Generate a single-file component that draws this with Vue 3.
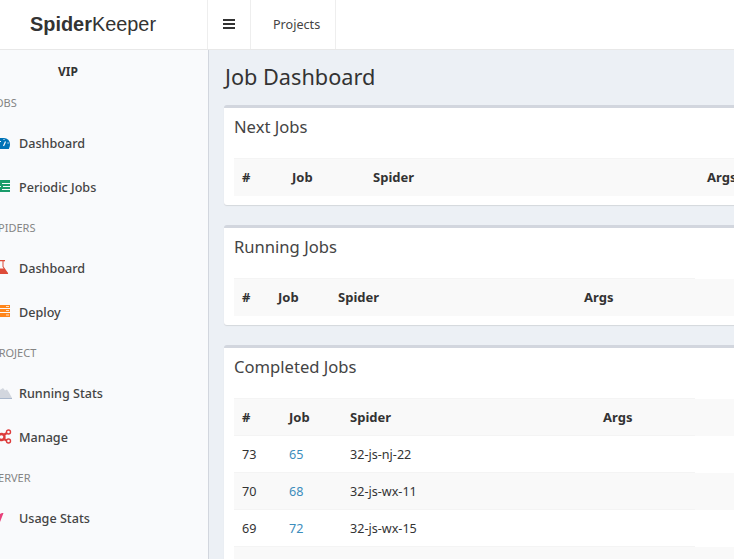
<script setup>
const menu = [
  { label: 'JOBS', items: [{ name: 'Dashboard', icon: 'gauge' }, { name: 'Periodic Jobs', icon: 'list' }] },
  { label: 'SPIDERS', items: [{ name: 'Dashboard', icon: 'flask' }, { name: 'Deploy', icon: 'server' }] },
  { label: 'PROJECT', items: [{ name: 'Running Stats', icon: 'area' }, { name: 'Manage', icon: 'network' }] },
  { label: 'SERVER', items: [{ name: 'Usage Stats', icon: 'heart' }] },
]

const panels = [
  { title: 'Next Jobs', cols: [50, 81, 334, 90], rows: [] },
  { title: 'Running Jobs', cols: [36, 60, 246, 119], rows: [] },
  {
    title: 'Completed Jobs',
    cols: [47, 61, 253, 100],
    rows: [
      { id: 73, job: 65, spider: '32-js-nj-22' },
      { id: 70, job: 68, spider: '32-js-wx-11' },
      { id: 69, job: 72, spider: '32-js-wx-15' },
      { id: 68, job: 70, spider: '32-js-wx-13' },
    ],
  },
]
</script>

<template>
  <div class="page">
    <header class="topbar">
      <div class="logo"><b>Spider</b>Keeper</div>
      <a class="toggle" href="#">
        <svg width="12" height="10" viewBox="0 0 12 10"><path d="M0 0h12v2H0zM0 4h12v2H0zM0 8h12v2H0z" fill="#333" /></svg>
      </a>
      <a class="nav-link" href="#">Projects</a>
    </header>
    <div class="body">
      <aside class="sidebar">
        <div class="user">VIP</div>
        <template v-for="group in menu" :key="group.label">
          <div class="section">{{ group.label }}</div>
          <a v-for="item in group.items" :key="item.name + item.icon" class="item" href="#">
            <svg class="icon" width="19" height="16" viewBox="0 0 19 16">
              <g v-if="item.icon === 'gauge'">
                <path d="M4 3a6 6 0 0 1 6 6c0 2-.5 3.500-1.200 5H-2V3z" fill="#0073b7" />
                <path d="M3.500 11 5.500 6.500" stroke="#f9fafc" stroke-width="1.200" fill="none" />
                <path d="M0 6.500h1M3.500 4.500h1M7.500 8h1.200" stroke="#f9fafc" stroke-width="1" fill="none" />
              </g>
              <g v-else-if="item.icon === 'list'">
                <rect x="0" y="1" width="10" height="12" fill="#1a9c6b" />
                <path d="M2 4.500h8M0 7.500h1M3 7.500h7M2 10.500h8" stroke="#f9fafc" stroke-width="1" fill="none" />
              </g>
              <g v-else-if="item.icon === 'flask'">
                <path d="M-3 0h8v1.300H-3z" fill="#dd4b39" />
                <path d="M3.500 1v5.500L8 13c.3.600 0 1-.6 1H-3V1h1v6h2V1z" fill="#dd4b39" />
                <path d="M-1 1.300h3.500v5.500l1.200 1.700H-1z" fill="#f9fafc" />
              </g>
              <g v-else-if="item.icon === 'server'">
                <rect x="0" y="1" width="10" height="3" fill="#ff851b" />
                <rect x="0" y="5" width="10" height="3" fill="#ff851b" />
                <rect x="0" y="9" width="10" height="4" fill="#ff851b" />
                <path d="M6 2.500h3M6 6.500h3M6 11h3" stroke="#fde0c4" stroke-width="1" fill="none" />
              </g>
              <g v-else-if="item.icon === 'area'">
                <path d="M0 5 3 3 5 5.500 7 4.500 9 7.500 12 13H0z" fill="#d2d6de" />
                <path d="M0 13.500h12" stroke="#a9b7cc" stroke-width="1" fill="none" />
              </g>
              <g v-else-if="item.icon === 'network'" fill="none" stroke="#dd3b3b">
                <path d="M2 7 8.500 3M2 9 8.500 12.500" stroke-width="2.200" />
                <circle cx="1.500" cy="8" r="3" stroke-width="2.400" fill="#f9fafc" />
                <circle cx="8.500" cy="3" r="2" stroke-width="1.400" fill="#f9fafc" />
                <circle cx="8.500" cy="12" r="2" stroke-width="1.400" fill="#f9fafc" />
              </g>
              <g v-else>
                <path d="M-4 3h2L0 4 2 3h1.500L0 12z" fill="#e8407a" />
              </g>
            </svg>
            <span>{{ item.name }}</span>
          </a>
        </template>
      </aside>
      <main class="content">
        <h1>Job Dashboard</h1>
        <section v-for="panel in panels" :key="panel.title" class="panel">
          <h3>{{ panel.title }}</h3>
          <div class="panel-body">
            <table>
              <colgroup>
                <col v-for="(w, i) in panel.cols" :key="i" :style="{ width: w + 'px' }" />
                <col />
              </colgroup>
              <thead>
                <tr>
                  <th>#</th>
                  <th>Job</th>
                  <th>Spider</th>
                  <th>Args</th>
                  <th class="extra"></th>
                </tr>
              </thead>
              <tbody>
                <tr v-for="row in panel.rows" :key="row.id">
                  <td>{{ row.id }}</td>
                  <td><a href="#">{{ row.job }}</a></td>
                  <td>{{ row.spider }}</td>
                  <td></td>
                  <td class="extra"></td>
                </tr>
              </tbody>
            </table>
          </div>
        </section>
      </main>
    </div>
  </div>
</template>

<style>
html, body {
  margin: 0;
  overflow: hidden;
}
</style>

<style scoped>
.page {
  width: 734px;
  height: 559px;
  overflow: hidden;
  font-family: "Noto Sans", sans-serif;
  font-size: 12.6px;
  color: #333;
  background: #ecf0f5;
}
a {
  text-decoration: none;
}
.topbar {
  display: flex;
  height: 49px;
  background: #fff;
  border-bottom: 1px solid #e8e8e8;
}
.logo {
  width: 208px;
  box-sizing: border-box;
  padding-left: 30px;
  border-right: 1px solid #eee;
  font-family: "Liberation Sans", sans-serif;
  font-size: 19.9px;
  line-height: 49px;
}
.toggle {
  width: 43px;
  box-sizing: border-box;
  padding-bottom: 1px;
  border-right: 1px solid #eee;
  display: flex;
  align-items: center;
  justify-content: center;
}
.nav-link {
  width: 85px;
  box-sizing: border-box;
  padding-left: 22px;
  border-right: 1px solid #eee;
  line-height: 49px;
  color: #444;
}
.body {
  display: flex;
  height: 510px;
}
.sidebar {
  width: 208px;
  flex: none;
  background: #f9fafc;
  border-right: 1px solid #d2d6de;
}
.user {
  width: 136px;
  height: 34px;
  line-height: 43px;
  text-align: center;
  font-weight: 700;
  font-size: 12px;
}
.section {
  height: 37px;
  line-height: 37px;
  margin-left: -8px;
  font-size: 11px;
  color: #848484;
}
.item {
  display: flex;
  align-items: center;
  height: 44px;
  color: #444;
  font-weight: 500;
}
.icon {
  flex: none;
}
.content {
  flex: none;
  width: 600px;
  box-sizing: border-box;
  padding-left: 15px;
}
h1 {
  margin: 0 0 0 1px;
  height: 55px;
  line-height: 53px;
  font-size: 21.7px;
  font-weight: 400;
}
.panel {
  height: 100px;
  box-sizing: border-box;
  margin-bottom: 20px;
  background: #fff;
  border-top: 3px solid #d2d6de;
  border-radius: 3px;
  box-shadow: 0 1px 1px rgba(0, 0, 0, 0.1);
}
.panel:last-child {
  height: 300px;
}
h3 {
  margin: 0;
  padding: 0 10px;
  height: 50px;
  line-height: 38px;
  font-size: 16.6px;
  font-weight: 400;
  color: #444;
}
.panel-body {
  padding: 0 0 10px 10px;
}
table {
  width: 600px;
  table-layout: fixed;
  border-collapse: collapse;
  font-size: 12.6px;
}
th, td {
  height: 37px;
  box-sizing: border-box;
  padding: 0 8px;
  text-align: left;
  line-height: 20px;
  border-top: 1px solid #f4f4f4;
}
td {
  padding-top: 2px;
}
th {
  font-size: 13px;
  font-weight: 700;
  background: #f9f9f9;
}
th.extra, td.extra {
  border-top: 0;
}
tbody tr:nth-child(even) td {
  background: #f9f9f9;
}
td a {
  color: #3c8dbc;
}
</style>
